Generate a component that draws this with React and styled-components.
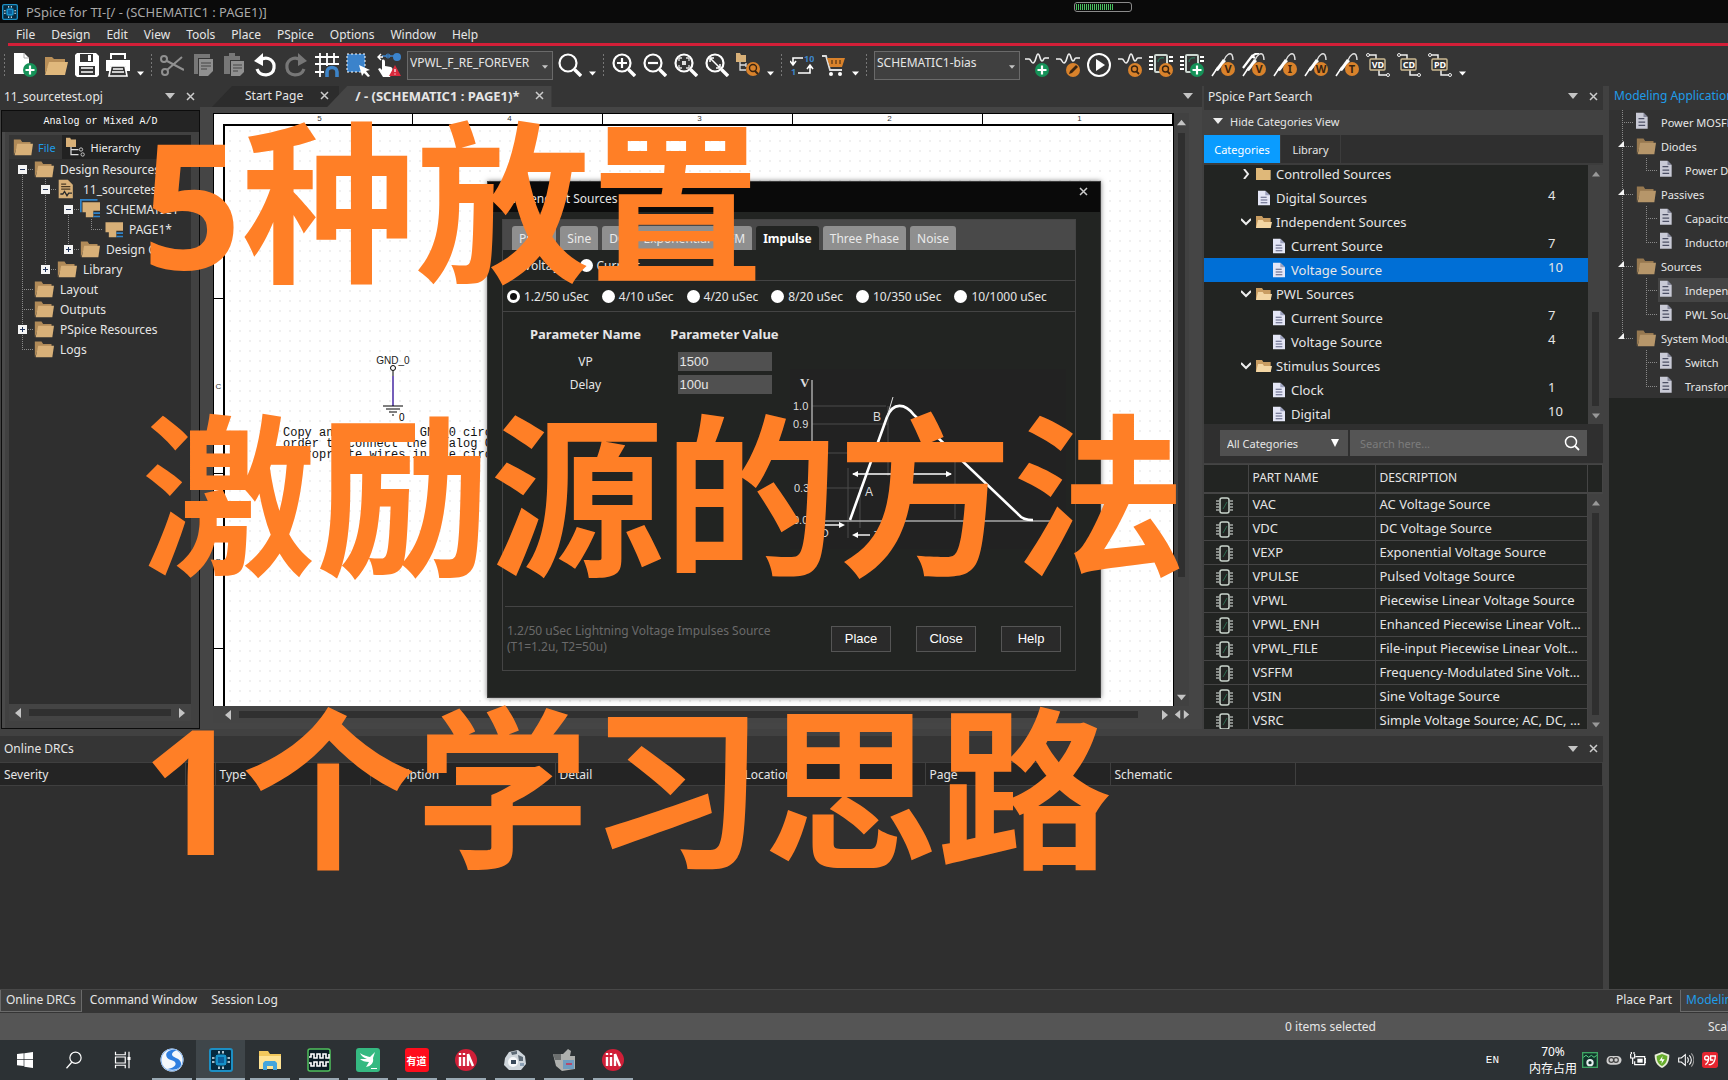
import React from 'react';
import styled, { createGlobalStyle, css } from 'styled-components';

const folderColor = '#d8b078';

const menus = ['File', 'Design', 'Edit', 'View', 'Tools', 'Place', 'PSpice', 'Options', 'Window', 'Help'];

// guides: one letter per tree level. v = line, t = tee, l = end, m = minus box, p = plus box, s = space
const projectTree = [
  { guides: ['m-first'], icon: 'folder', label: 'Design Resources' },
  { guides: ['v', 'm'], icon: 'design', label: '11_sourcetest' },
  { guides: ['v', 'v', 'm-first'], icon: 'schematic', label: 'SCHEMATIC1*' },
  { guides: ['v', 'v', 'v', 'l'], icon: 'page', label: 'PAGE1*' },
  { guides: ['v', 'v', 'p-last'], icon: 'folder', label: 'Design C' },
  { guides: ['v', 'p-last'], icon: 'folder', label: 'Library' },
  { guides: ['t'], icon: 'folder', label: 'Layout' },
  { guides: ['t'], icon: 'folder', label: 'Outputs' },
  { guides: ['p'], icon: 'folder', label: 'PSpice Resources' },
  { guides: ['l'], icon: 'folder', label: 'Logs' }
];

const modelTree = [
  { guides: ['t'], icon: 'doc', label: 'Power MOSFET' },
  { guides: ['a'], icon: 'folder', label: 'Diodes' },
  { guides: ['v', 'l'], icon: 'doc', label: 'Power Diode' },
  { guides: ['a'], icon: 'folder', label: 'Passives' },
  { guides: ['v', 't'], icon: 'doc', label: 'Capacitor' },
  { guides: ['v', 'l'], icon: 'doc', label: 'Inductor' },
  { guides: ['a'], icon: 'folder', label: 'Sources' },
  { guides: ['v', 't'], icon: 'doc', label: 'Independent Sources', active: true },
  { guides: ['v', 'l'], icon: 'doc', label: 'PWL Sources' },
  { guides: ['a-last'], icon: 'folder', label: 'System Modules' },
  { guides: ['s', 't'], icon: 'doc', label: 'Switch' },
  { guides: ['s', 'l'], icon: 'doc', label: 'Transformer' }
];

const categories = [
  { label: 'Controlled Sources', group: 'closed' },
  { label: 'Digital Sources', count: 4 },
  { label: 'Independent Sources', group: 'open' },
  { label: 'Current Source', count: 7, nested: true },
  { label: 'Voltage Source', count: 10, nested: true, active: true },
  { label: 'PWL Sources', group: 'open' },
  { label: 'Current Source', count: 7, nested: true },
  { label: 'Voltage Source', count: 4, nested: true },
  { label: 'Stimulus Sources', group: 'open' },
  { label: 'Clock', count: 1, nested: true },
  { label: 'Digital', count: 10, nested: true }
];

const parts = [
  ['VAC', 'AC Voltage Source'],
  ['VDC', 'DC Voltage Source'],
  ['VEXP', 'Exponential Voltage Source'],
  ['VPULSE', 'Pulsed Voltage Source'],
  ['VPWL', 'Piecewise Linear Voltage Source'],
  ['VPWL_ENH', 'Enhanced Piecewise Linear Voltage Source'],
  ['VPWL_FILE', 'File-input Piecewise Linear Voltage Source'],
  ['VSFFM', 'Frequency-Modulated Sine Voltage Source'],
  ['VSIN', 'Sine Voltage Source'],
  ['VSRC', 'Simple Voltage Source; AC, DC, and Transient']
];

const impulses = ['1.2/50 uSec', '4/10 uSec', '4/20 uSec', '8/20 uSec', '10/350 uSec', '10/1000 uSec'];

/* ---------- icons ---------- */

const Svg = ({ size = 24, children, ...rest }) => (
  <svg width={size} height={size} viewBox="0 0 24 24" fill="none" aria-hidden="true" {...rest}>
    {children}
  </svg>
);

const PlusBadge = () => (
  <>
    <circle cx="17" cy="17" r="7" fill="#159258" />
    <path d="M17 12.500v9M12.500 17h9" stroke="#fff" strokeWidth="2.200" />
  </>
);

const FindBadge = () => (
  <>
    <circle cx="17" cy="17" r="7" fill="#d9822b" />
    <circle cx="16.500" cy="16" r="3" stroke="#3a2410" strokeWidth="1.400" />
    <path d="M18.500 18.500l2.500 2.500" stroke="#3a2410" strokeWidth="1.800" />
  </>
);

const Lens = ({ children }) => (
  <>
    <circle cx="10" cy="10" r="8.500" stroke="#fff" strokeWidth="2.200" />
    <path d="M16.500 16.500L23 23" stroke="#fff" strokeWidth="3.400" />
    {children}
  </>
);

const Wave = () => <path d="M0 6h4c2 0 2 4 4 4 3 0 3-9 5-9s2 7 4 7 1-3 3-3h4" stroke="#eee" strokeWidth="1.600" />;

const ChipShape = () => (
  <>
    <rect x="6" y="2" width="12" height="17" rx="1" stroke="#ccd6d0" strokeWidth="2" />
    <path d="M9 9c0-3 3-5 6-4" stroke="#2f6c54" strokeWidth="1.500" />
    <path d="M0 4h4M0 8h4M0 12h4M0 16h4M20 4h4M20 8h4" stroke="#fff" strokeWidth="1.800" />
  </>
);

const Probe = () => (
  <>
    <path d="M1 23l6-9" stroke="#fff" strokeWidth="1.500" />
    <path d="M4 17L12 6l3 2-8 10z" fill="#fff" />
    <path d="M13 7c2-5 6-8 8-5 1 2 1 3 1 5" stroke="#ddd" strokeWidth="1.500" />
  </>
);

const ProbeIcon = ({ letter, double }) => (
  <Svg>
    {double && <path d="M1 15L10 3l3 2M9 5c2-3 5-5 8-4" stroke="#fff" strokeWidth="2.200" />}
    <Probe />
    <circle cx="17" cy="16" r="7" fill="#d9822b" />
    <text x="17" y="20" textAnchor="middle" fontSize="11" fontWeight="700" fill="#3a2410">{letter}</text>
  </Svg>
);

const PowerIcon = ({ label }) => (
  <Svg>
    <path d="M3 2h7v4M13 17v5h8" stroke="#eee" strokeWidth="1.500" />
    <circle cx="2" cy="2" r="1.500" stroke="#eee" />
    <circle cx="22" cy="22" r="1.500" stroke="#eee" />
    <rect x="4" y="6" width="15" height="11" rx="1" stroke="#cdbb93" strokeWidth="1.400" />
    <text x="12" y="15" textAnchor="middle" fontSize="9" fontWeight="700" fill="#fff">{label}</text>
  </Svg>
);

const icons = {
  new: (
    <Svg>
      <path d="M1 0h10l5 5v16H1z" fill="#fff" />
      <path d="M11 0v5h5" stroke="#aaa" />
      <PlusBadge />
    </Svg>
  ),
  open: (
    <Svg>
      <path d="M1 21V4h7l2 2h11v3H6z" fill="#b98f58" />
      <path d="M5 9h19l-3 13H1z" fill="#e0b87c" />
    </Svg>
  ),
  save: (
    <Svg>
      <path d="M0 2l2-2h19l3 3v19l-2 2H2l-2-2z" fill="#fff" />
      <path d="M5 1h13v8H5z" fill="#353535" />
      <path d="M13 2h3v6h-3z" fill="#fff" />
      <path d="M4 13h16v9H4z" fill="#353535" />
      <path d="M6 15h12M6 19h12" stroke="#fff" strokeWidth="1.600" />
    </Svg>
  ),
  print: (
    <Svg>
      <path d="M5 6V1h14v5" stroke="#fff" strokeWidth="2" />
      <path d="M0 7h24v11h-4v-5H4v5H0z" fill="#fff" />
      <path d="M5 13h14l2 10H3z" stroke="#fff" strokeWidth="1.600" />
      <path d="M7 16h10M6 19h12" stroke="#fff" strokeWidth="1.500" />
    </Svg>
  ),
  cut: (
    <Svg stroke="#909090" strokeWidth="2">
      <circle cx="4" cy="6" r="3" />
      <circle cx="5" cy="19" r="3" />
      <path d="M7 8l17 9M7 17L22 4" />
    </Svg>
  ),
  copy: (
    <Svg>
      <path d="M3 1h16v4H7v16H3z" fill="#777" />
      <path d="M8 6h14v12l-5 5H8z" fill="#909090" />
      <path d="M10 10h10M10 13h10M10 16h6" stroke="#444" />
    </Svg>
  ),
  paste: (
    <Svg>
      <path d="M2 3h5V0h6v3h5v4H8v14H2z" fill="#777" />
      <path d="M9 8h13v11l-4 4H9z" fill="#909090" />
      <path d="M11 12h9M11 15h9M11 18h5" stroke="#444" />
    </Svg>
  ),
  undo: (
    <Svg>
      <path d="M7 7c8-5 15 1 14 8-1 9-14 9-17 1" stroke="#fff" strokeWidth="3.200" />
      <path d="M10 0v13L1 8z" fill="#fff" />
    </Svg>
  ),
  redo: (
    <Svg>
      <path d="M17 7C9 2 2 8 3 15c1 9 14 9 17 1" stroke="#777" strokeWidth="3.200" />
      <path d="M14 0v13l9-5z" fill="#777" />
    </Svg>
  ),
  grid: (
    <Svg>
      <path d="M5 0v24M12 0v13M19 0v11M0 4h24M0 11h24M0 19h9" stroke="#fff" strokeWidth="1.800" />
      <path d="M12 24v-5c0-6 10-6 10 0v5" stroke="#3d84c8" strokeWidth="3.600" />
    </Svg>
  ),
  select: (
    <Svg>
      <path d="M1 1h18v18H1z" fill="#3b83cb" stroke="#fff" strokeDasharray="2 2" />
      <path d="M13 12l11 5-4 1 4 5-2 1-4-4-2 3z" fill="#fff" />
    </Svg>
  ),
  hand: (
    <Svg>
      <path d="M5 3h14" stroke="#3b83cb" strokeWidth="1.500" />
      <path d="M4 1L1 4l3 3M1 4h5" stroke="#fff" strokeWidth="1.400" />
      <circle cx="11" cy="3" r="2" stroke="#3b83cb" />
      <circle cx="20" cy="4" r="4" fill="#3b83cb" />
      <path d="M5 7c2-1 3 0 3 2v4l6 1c2 1 2 3 1 5l-2 5H6l-5-8 2-1 2 2z" fill="#fff" />
      <path d="M18 12l6 11H12z" fill="#d9293c" />
      <path d="M18 16v3M18 20.500v1" stroke="#fff" strokeWidth="1.200" />
    </Svg>
  ),
  search: <Svg><Lens /></Svg>,
  zoomIn: <Svg><Lens><path d="M10 5v10M5 10h10" stroke="#fff" strokeWidth="2.200" /></Lens></Svg>,
  zoomOut: <Svg><Lens><path d="M5 10h10" stroke="#fff" strokeWidth="2.200" /></Lens></Svg>,
  zoomFit: (
    <Svg>
      <Lens>
        <path d="M5 8V5h3M12 5h3v3M15 12v3h-3M8 15H5v-3" stroke="#ddd" strokeWidth="1.300" />
        <path d="M8 8h4v4H8z" fill="#ddd" />
      </Lens>
    </Svg>
  ),
  zoomArea: (
    <Svg>
      <Lens><path d="M6 6l8 8M5 9V5h4M11 15h4v-4" stroke="#fff" strokeWidth="1.500" /></Lens>
    </Svg>
  ),
  findPart: (
    <Svg>
      <path d="M0 0h4l1 2h5v7H0z" fill="#d8b078" />
      <path d="M4 9v8h6M4 12h6M10 10v4" stroke="#ddd" strokeWidth="1.300" />
      <circle cx="17" cy="16" r="7" fill="#d9822b" />
      <circle cx="17" cy="15" r="3.500" stroke="#3a2410" strokeWidth="1.400" />
      <path d="M19 18l3 3" stroke="#3a2410" strokeWidth="2" />
    </Svg>
  ),
  renumber: (
    <Svg>
      <path d="M13 5H3v6M0 8l3 4 3-4M8 20h12v-7M17 16l3-4 3 4" stroke="#fff" strokeWidth="1.600" />
      <text x="14" y="9" fontSize="9" fontWeight="700" fill="#3d84c8">10</text>
      <text x="1" y="22" fontSize="9" fontWeight="700" fill="#3d84c8">1</text>
    </Svg>
  ),
  cart: (
    <Svg>
      <path d="M1 3h4l4 14h12" stroke="#ddd" strokeWidth="1.800" />
      <path d="M6 5h18l-3 9H9z" fill="#d9822b" />
      <path d="M11 7v4M15 7v4M19 7v4" stroke="#3a2410" />
      <circle cx="10" cy="21" r="2" fill="#fff" />
      <circle cx="19" cy="21" r="2" fill="#fff" />
    </Svg>
  ),
  simNew: <Svg><Wave /><PlusBadge /></Svg>,
  simEdit: (
    <Svg>
      <Wave />
      <circle cx="17" cy="17" r="7" fill="#d9822b" />
      <path d="M13 21l1-3 6-6 2 2-6 6z" fill="#3a2410" />
    </Svg>
  ),
  run: (
    <Svg>
      <circle cx="12" cy="12" r="11" stroke="#fff" strokeWidth="2" />
      <path d="M9 6l9 6-9 6z" fill="#fff" />
    </Svg>
  ),
  simView: <Svg><Wave /><FindBadge /></Svg>,
  chipFind: <Svg><ChipShape /><FindBadge /></Svg>,
  chipAdd: <Svg><ChipShape /><PlusBadge /></Svg>,
  v: <ProbeIcon letter="V" />,
  vv: <ProbeIcon letter="V" double />,
  i: <ProbeIcon letter="I" />,
  w: <ProbeIcon letter="W" />,
  t: <ProbeIcon letter="T" />,
  vd: <PowerIcon label="VD" />,
  cd: <PowerIcon label="CD" />,
  pd: <PowerIcon label="PD" />
};

const TreeIcon = ({ kind, dim }) => {
  if (kind === 'folder') {
    return (
      <Svg size={20} opacity={dim ? 0.8 : 1}>
        <path d="M1 22V3h8l2 3h10v3H6z" fill="#b08a58" />
        <path d="M5 8h19l-2 14H2z" fill={folderColor} />
      </Svg>
    );
  }
  if (kind === 'design') {
    return (
      <Svg size={20}>
        <path d="M2 1h11l6 6v16H2z" fill={folderColor} />
        <path d="M5 6h6M5 9h11M5 12h11" stroke="#4a3a24" strokeWidth="1.500" />
        <path d="M4 18h3l2-3 3 5 2-3h4" stroke="#2b2b2b" strokeWidth="1.600" />
      </Svg>
    );
  }
  if (kind === 'doc') {
    return (
      <Svg size={20}>
        <path d="M0 1h9l5 5v14H0z" fill="#c9cad6" />
        <path d="M9 1v5h5z" fill="#85879a" />
        <path d="M3 8h7M3 12h8M3 16h8" stroke="#4d5065" strokeWidth="1.500" />
      </Svg>
    );
  }
  return (
    <Svg size={20}>
      {kind === 'schematic' && <path d="M1 16V1h20" stroke="#2f83c9" strokeWidth="2" />}
      <path d="M3 4h21v10h-8v8H7v-6H3z" fill={folderColor} />
      <path d="M16 17h8M16 21h8" stroke="#2f83c9" strokeWidth="2" />
    </Svg>
  );
};

const CategoryIcon = ({ kind }) => {
  if (kind) {
    return (
      <Svg size={16}>
        <path d="M0 21V3h9l2 3h11v15z" fill={kind === 'open' ? '#c99d62' : '#dfb879'} />
        {kind === 'open' && <path d="M0 21L3 9h7l2 3h12l-2 9z" fill="#f3d6a4" />}
      </Svg>
    );
  }
  return (
    <Svg size={16}>
      <path d="M3 1h11l7 7v15H3z" fill="#e4e6f6" />
      <path d="M14 1v7h7z" fill="#9ba0bd" />
      <path d="M7 11h9M7 15h10M7 19h10" stroke="#5a5f80" strokeWidth="1.600" />
    </Svg>
  );
};

const PartIcon = () => (
  <svg width="17" height="17" viewBox="0 0 17 17" fill="none" aria-hidden="true">
    <rect x="4" y="1" width="9" height="15" rx="2" stroke="#c9d4cc" strokeWidth="1.500" />
    <path d="M7 12l4-7" stroke="#2c6c50" />
    <path d="M0 4h3M0 7h3M0 10h3M0 13h3M14 4h3M14 7h3M14 10h3M14 13h3" stroke="#e6ece8" />
  </svg>
);

const Guide = ({ kind, step, height }) => {
  const mid = Math.floor(step / 2);
  const cy = height / 2;
  const [type, where] = kind.split('-');
  const top = where === 'first' ? cy : 0;
  const bottom = type === 'l' || where === 'last' ? cy : height;
  return (
    <svg width={step} height={height} fill="none" aria-hidden="true">
      {type !== 's' && (
        <path d={`M${mid + 0.5} ${top}V${bottom}`} stroke="#8a8a8a" strokeDasharray="1 1" />
      )}
      {type !== 's' && type !== 'v' && (
        <path d={`M${mid} ${cy + 0.5}H${step}`} stroke="#8a8a8a" strokeDasharray="1 1" />
      )}
      {(type === 'm' || type === 'p') && (
        <>
          <rect x={mid - 4} y={cy - 4} width="9" height="9" fill="#f4f4f4" />
          <path d={`M${mid - 2} ${cy + 0.5}h5`} stroke="#23365c" />
          {type === 'p' && <path d={`M${mid + 0.5} ${cy - 2}v5`} stroke="#23365c" />}
        </>
      )}
      {type === 'a' && <path d={`M${mid + 2} ${cy - 5}v6h-6z`} fill="#f4f4f4" />}
    </svg>
  );
};

const Arrow = ({ dir = 'down', size = 8, color = '#c4c4c4' }) => {
  const shapes = {
    down: 'M0 2h10L5 8z',
    up: 'M0 8h10L5 2z',
    left: 'M8 0v10L2 5z',
    right: 'M2 0v10l6-5z'
  };
  return (
    <svg width={size} height={size} viewBox="0 0 10 10" aria-hidden="true">
      <path d={shapes[dir]} fill={color} />
    </svg>
  );
};

const Cross = () => (
  <svg width="9" height="9" viewBox="0 0 9 9" aria-hidden="true">
    <path d="M1 1l7 7M8 1L1 8" stroke="#ccc" strokeWidth="1.500" />
  </svg>
);

const AppLogo = ({ size }) => (
  <Svg size={size}>
    <rect x="1" y="1" width="22" height="22" rx="2" fill="#062a3f" stroke="#1c8fc4" strokeWidth="2" />
    <path d="M10 3v18M14 3v18M3 10h18M3 14h18" stroke="#d7ecf5" strokeWidth="1.600" />
    <rect x="6" y="6" width="12" height="12" rx="3" fill="#1591c9" stroke="#062a3f" />
    <rect x="9" y="9" width="6" height="6" fill="#0b5f9c" />
  </Svg>
);

const ImpulseChart = () => (
  <svg width="276" height="180" viewBox="0 0 276 180" fill="none" role="img" aria-label="Impulse waveform">
    <rect width="276" height="180" fill="#222222" />
    <path d="M22 37h74M22 55h76M22 84h52M22 119h50M98 37v70M165 84v66M58 99v70M70 119v40" stroke="#4a4a4a" />
    <path d="M22 11v141M22 152h243" stroke="#a8a8a8" strokeWidth="1.500" />
    <path d="M60 151L97 48c6-15 18-14 27-2l105 100c3 4 8 5 14 5" stroke="#fff" strokeWidth="2.600" />
    <path d="M97 48l6-20" stroke="#ddd" />
    <path d="M63 105h98" stroke="#fff" strokeWidth="1.400" />
    <path d="M68 102l-6 3 6 3zM156 102l6 3-6 3z" fill="#fff" />
    <path d="M24 156h28" stroke="#fff" strokeWidth="1.400" />
    <path d="M49 153l6 3-6 3zM68 163l-6 3 6 3z" fill="#fff" />
    <path d="M66 166h14" stroke="#fff" strokeWidth="1.400" />
    <g fill="#ddd" fontSize="12" fontFamily="Liberation Sans, sans-serif">
      <text x="10" y="18" fontFamily="Liberation Serif, serif" fontWeight="700" fontSize="13">V</text>
      <text x="3" y="41" fontSize="11">1.0</text>
      <text x="3" y="59" fontSize="11">0.9</text>
      <text x="4" y="89" fontSize="11">0.5</text>
      <text x="4" y="123" fontSize="11">0.3</text>
      <text x="3" y="155" fontSize="11">0.0</text>
      <text x="83" y="52">B</text>
      <text x="75" y="127">A</text>
      <text x="112" y="115" fontSize="11">T<tspan fontSize="8">2</tspan></text>
      <text x="24" y="168" fontSize="11">TD</text>
      <text x="84" y="170" fontSize="11">T<tspan fontSize="8">1</tspan></text>
    </g>
  </svg>
);

const GroundSymbol = () => (
  <svg width="60" height="72" viewBox="0 0 60 72" fill="none" role="img" aria-label="GND_0" overflow="visible">
    <text x="16" y="9" textAnchor="middle" fontSize="10" fill="#222" fontFamily="Liberation Sans, sans-serif">GND_0</text>
    <circle cx="16" cy="13" r="2.500" stroke="#000" />
    <path d="M16 16v5" stroke="#000" />
    <path d="M16 21v30" stroke="#3a1a9c" strokeWidth="1.400" />
    <path d="M6 51h20M9 54h14M12 57h8M15 60h2" stroke="#000" />
    <text x="22" y="66" fontSize="10" fill="#000" fontFamily="Liberation Sans, sans-serif">0</text>
  </svg>
);

/* ---------- toolbar layout ---------- */

const ToolbarGroup = ({ names }) => names.map((name) => (
  <ToolButton key={name} type="button" aria-label={name}>{icons[name]}</ToolButton>
));

const Toolbar = () => (
  <ToolbarBar>
    <Grip />
    <ToolbarGroup names={['new', 'open', 'save', 'print']} />
    <Overflow><Arrow size={7} color="#fff" /></Overflow>
    <Grip />
    <ToolbarGroup names={['cut', 'copy', 'paste', 'undo', 'redo', 'grid', 'select', 'hand']} />
    <Combo>
      <select aria-label="Part"><option>VPWL_F_RE_FOREVER</option></select>
      <Arrow size={6} />
    </Combo>
    <ToolbarGroup names={['search']} />
    <Overflow><Arrow size={7} color="#fff" /></Overflow>
    <Grip />
    <ToolbarGroup names={['zoomIn', 'zoomOut', 'zoomFit', 'zoomArea', 'findPart']} />
    <Overflow><Arrow size={7} color="#fff" /></Overflow>
    <Grip />
    <ToolbarGroup names={['renumber', 'cart']} />
    <Overflow><Arrow size={7} color="#fff" /></Overflow>
    <Grip />
    <Combo>
      <select aria-label="Simulation profile"><option>SCHEMATIC1-bias</option></select>
      <Arrow size={6} />
    </Combo>
    <ToolbarGroup
      names={['simNew', 'simEdit', 'run', 'simView', 'chipFind', 'chipAdd', 'v', 'vv', 'i', 'w', 't', 'vd', 'cd', 'pd']}
    />
    <Overflow><Arrow size={7} color="#fff" /></Overflow>
  </ToolbarBar>
);

const PanelHeader = ({ title }) => (
  <HeaderBar>
    <h2>{title}</h2>
    <IconButton type="button" aria-label="Panel menu"><Arrow size={10} /></IconButton>
    <IconButton type="button" aria-label="Close panel"><Cross /></IconButton>
  </HeaderBar>
);

const ProjectPanel = () => (
  <ProjectColumn>
    <PanelHeader title="11_sourcetest.opj" />
    <ProjectBox>
      <ProjectType>Analog or Mixed A/D</ProjectType>
      <ProjectInner>
        <ProjectTabs>
          <ProjectTab type="button" $active><TreeIcon kind="folder" />File</ProjectTab>
          <ProjectTab type="button">
            <Svg size={20}>
              <path d="M0 1h5l1 2h6v9H0z" fill={folderColor} />
              <path d="M6 12v9h9M6 15h9" stroke="#ddd" strokeWidth="1.500" />
              <circle cx="18" cy="15" r="2" stroke="#ddd" />
              <circle cx="20" cy="21" r="2" stroke="#ddd" />
            </Svg>
            Hierarchy
          </ProjectTab>
        </ProjectTabs>
        <ProjectTree>
          {projectTree.map((row) => (
            <ProjectRow key={row.label}>
              {row.guides.map((g, i) => <Guide key={i} kind={g} step={23} height={20} />)}
              <TreeIcon kind={row.icon} />
              <span>{row.label}</span>
            </ProjectRow>
          ))}
        </ProjectTree>
        <HScroll><Arrow dir="left" size={10} /><i /><Arrow dir="right" size={10} /></HScroll>
      </ProjectInner>
    </ProjectBox>
  </ProjectColumn>
);

const SourceDialog = () => (
  <Dialog role="dialog" aria-label="Independent Sources">
    <DialogTitle>
      <h2>Independent Sources</h2>
      <IconButton type="button" aria-label="Close dialog"><Cross /></IconButton>
    </DialogTitle>
    <DialogFrame>
      <DialogTabs>
        {['Pulse', 'Sine', 'DC', 'Exponential', 'FM', 'Impulse', 'Three Phase', 'Noise'].map((tab) => (
          <DialogTab key={tab} type="button" $active={tab === 'Impulse'}>{tab}</DialogTab>
        ))}
      </DialogTabs>
      <RadioRow>
        <label><input type="radio" name="kind" defaultChecked />Voltage</label>
        <label><input type="radio" name="kind" />Current</label>
      </RadioRow>
      <RadioRow>
        {impulses.map((name, i) => (
          <label key={name}><input type="radio" name="impulse" defaultChecked={i === 0} />{name}</label>
        ))}
      </RadioRow>
      <DialogBody>
        <ParamTable>
          <thead>
            <tr><th>Parameter Name</th><th>Parameter Value</th></tr>
          </thead>
          <tbody>
            <tr>
              <td><label htmlFor="vp">VP</label></td>
              <td><input id="vp" defaultValue="1500" /></td>
            </tr>
            <tr>
              <td><label htmlFor="delay">Delay</label></td>
              <td><input id="delay" defaultValue="100u" /></td>
            </tr>
          </tbody>
        </ParamTable>
        <ChartHolder><ImpulseChart /></ChartHolder>
      </DialogBody>
      <DialogFooter>
        <p>1.2/50 uSec Lightning Voltage Impulses Source<br />(T1=1.2u, T2=50u)</p>
        <DialogButton type="button">Place</DialogButton>
        <DialogButton type="button">Close</DialogButton>
        <DialogButton type="button">Help</DialogButton>
      </DialogFooter>
    </DialogFrame>
  </Dialog>
);

const Editor = () => (
  <EditorColumn>
    <EditorTabs>
      <EditorTab type="button">Start Page<Cross /></EditorTab>
      <EditorTab type="button" $active>/ - (SCHEMATIC1 : PAGE1)*<Cross /></EditorTab>
      <TabListArrow><Arrow size={10} /></TabListArrow>
    </EditorTabs>
    <EditorGrid>
      <Sheet>
        <TopRuler>{[5, 4, 3, 2, 1].map((n) => <span key={n}>{n}</span>)}</TopRuler>
        <SideRuler>{['D', 'C', 'B', 'A'].map((n) => <span key={n}>{n}</span>)}</SideRuler>
        <Page>
          <Placed $left={152} $top={229}><GroundSymbol /></Placed>
          <Placed $left={58} $top={302}>
            <Note>
              Copy and paste the GND_0 circuit in<br />
              order to connect the Analog Ground to<br />
              appropriate wires in the circuit
            </Note>
          </Placed>
        </Page>
      </Sheet>
      <VScroll $after={110}><Arrow dir="up" size={9} /><i /><Arrow size={9} /></VScroll>
      <HScroll $wide><Arrow dir="left" size={10} /><i /><Arrow dir="right" size={10} /></HScroll>
      <Splitter><Arrow dir="left" size={9} /><Arrow dir="right" size={9} /></Splitter>
    </EditorGrid>
    <SourceDialog />
  </EditorColumn>
);

const PartSearch = () => (
  <SearchColumn>
    <PanelHeader title="PSpice Part Search" />
    <HideToggle type="button"><Arrow size={10} color="#eee" />Hide Categories View</HideToggle>
    <SearchTabs>
      <SearchTab type="button" $active>Categories</SearchTab>
      <SearchTab type="button">Library</SearchTab>
    </SearchTabs>
    <CategoryArea>
      <CategoryList>
        {categories.map((c, i) => (
          <CategoryRow key={i} $nested={c.nested} $active={c.active}>
            <Twisty>
              {c.group && (
                <svg width="10" height="10" viewBox="0 0 10 10" fill="none">
                  <path d={c.group === 'open' ? 'M0 2l5 5 5-5' : 'M3 0l4 5-4 5'} stroke="#eee" strokeWidth="2" />
                </svg>
              )}
            </Twisty>
            <CategoryIcon kind={c.group} />
            <span>{c.label}</span>
            <b>{c.count}</b>
          </CategoryRow>
        ))}
      </CategoryList>
      <VScroll $before={128}><Arrow dir="up" size={8} color="#999" /><i /><Arrow size={8} color="#999" /></VScroll>
    </CategoryArea>
    <SearchBar>
      <FilterBox>
        <select aria-label="Category"><option>All Categories</option></select>
        <svg width="8" height="8" viewBox="0 0 8 8"><path d="M0 0h8L4 8z" fill="#fff" /></svg>
      </FilterBox>
      <SearchBox>
        <input type="search" aria-label="Search parts" placeholder="Search here..." />
        <svg width="16" height="16" viewBox="0 0 16 16" fill="none">
          <circle cx="7" cy="7" r="5.500" stroke="#fff" strokeWidth="1.500" />
          <path d="M11 11l4 4" stroke="#fff" strokeWidth="1.800" />
        </svg>
      </SearchBox>
    </SearchBar>
    <PartArea>
      <PartTable>
        <colgroup><col width="44" /><col width="127" /><col /><col width="15" /></colgroup>
        <thead>
          <tr><th /><th>PART NAME</th><th>DESCRIPTION</th><th /></tr>
        </thead>
        <tbody>
          {parts.map(([name, text], i) => (
            <tr key={name}>
              <td><PartIcon /></td>
              <td>{name}</td>
              <td>{text}</td>
              {i === 0 && (
                <td rowSpan={parts.length}>
                  <VScroll><Arrow dir="up" size={8} color="#999" /><i /><Arrow size={8} color="#999" /></VScroll>
                </td>
              )}
            </tr>
          ))}
        </tbody>
      </PartTable>
    </PartArea>
  </SearchColumn>
);

const Modeling = () => (
  <ModelColumn>
    <ModelTitle>Modeling Application</ModelTitle>
    <ModelTree>
      {modelTree.map((row) => (
        <ModelRow key={row.label}>
          {row.guides.map((g, i) => <Guide key={i} kind={g} step={24} height={24} />)}
          <ModelLabel $active={row.active}><TreeIcon kind={row.icon} dim />{row.label}</ModelLabel>
        </ModelRow>
      ))}
    </ModelTree>
  </ModelColumn>
);

const DrcPanel = () => (
  <DrcSection>
    <PanelHeader title="Online DRCs" />
    <DrcTable>
      <colgroup>
        <col width="185" /><col width="30" /><col width="155" /><col width="185" /><col width="185" />
        <col width="185" /><col width="185" /><col width="185" /><col />
      </colgroup>
      <thead>
        <tr>
          {['Severity', '', 'Type', 'Description', 'Detail', 'Location', 'Page', 'Schematic', ''].map((h, i) => (
            <th key={i}>{h}</th>
          ))}
        </tr>
      </thead>
    </DrcTable>
  </DrcSection>
);

const Reader = () => (
  <Svg>
    <circle cx="12" cy="12" r="11" fill="#d01f38" />
    <path d="M6 9v9M10 9v9M14 6l5 12M14 6v12" stroke="#fff" strokeWidth="2.400" />
    <path d="M6 5v2M10 5v2" stroke="#fff" strokeWidth="2.400" />
  </Svg>
);

const Taskbar = () => (
  <TaskbarBar>
    <TaskButton type="button" aria-label="Start">
      <Svg size={16}>
        <path d="M0 3l10-1v9H0zM11 2l13-2v11H11zM0 12h10v9L0 20zM11 12h13v12l-13-2z" fill="#fff" />
      </Svg>
    </TaskButton>
    <TaskButton type="button" aria-label="Search">
      <Svg size={18}>
        <circle cx="14" cy="9" r="7.500" stroke="#fff" strokeWidth="1.600" />
        <path d="M9 15l-7 8" stroke="#fff" strokeWidth="1.600" />
      </Svg>
    </TaskButton>
    <TaskButton type="button" aria-label="Task view">
      <Svg size={18}>
        <path d="M2 1v4h13V1M2 23v-4h13v4M2 8h13v8H2zM20 1v22" stroke="#fff" strokeWidth="1.600" />
        <path d="M18 8h4v4h-4z" fill="#fff" />
      </Svg>
    </TaskButton>
    <TaskButton type="button" aria-label="Browser" $open>
      <Svg>
        <circle cx="12" cy="12" r="11.500" fill="#f4f8fc" />
        <path d="M17 2C5 0 3 10 11 12s5 8-4 9c15 4 18-8 9-11-6-2-5-6 1-8z" fill="#2f7fe0" />
        <circle cx="12" cy="12" r="11" stroke="#7db0ee" />
      </Svg>
    </TaskButton>
    <TaskButton type="button" aria-label="PSpice" $open $active><AppLogo size={24} /></TaskButton>
    <TaskButton type="button" aria-label="Files" $open>
      <Svg>
        <path d="M1 3h9l2 3h11v15H1z" fill="#f2c85c" />
        <path d="M1 8h22v13H1z" fill="#ffe394" />
        <path d="M5 22v-7l2-2h10l2 2v7h-4v-4H9v4z" fill="#45a5dc" />
      </Svg>
    </TaskButton>
    <TaskButton type="button" aria-label="Waveforms" $open>
      <Svg>
        <rect x="1" y="1" width="22" height="22" rx="2" fill="#0c1c24" stroke="#4fc05c" strokeWidth="1.500" />
        <path d="M2 9h2V6h3v4h3V6h3v4h3V6h3v4h3V6" stroke="#fff" strokeWidth="1.600" />
        <path d="M2 15h2v3h3v-4h3v4h3v-4h3v4h3v-4h3" stroke="#fff" strokeWidth="1.600" />
      </Svg>
    </TaskButton>
    <TaskButton type="button" aria-label="Notes" $open>
      <Svg>
        <rect width="24" height="24" rx="3" fill="#35b981" />
        <path d="M4 5c4 3 7 3 10 4l5-5-2 6c1 5-2 8-7 9l3-5c-4 0-7-1-9-3h7C8 10 5 8 4 5z" fill="#fff" />
        <path d="M15 20.500h6" stroke="#fff" />
      </Svg>
    </TaskButton>
    <TaskButton type="button" aria-label="Dictionary" $open><Youdao>有道</Youdao></TaskButton>
    <TaskButton type="button" aria-label="Reader" $open><Reader /></TaskButton>
    <TaskButton type="button" aria-label="Capture" $open>
      <Svg>
        <path d="M2 10l4-6 9-2 7 6 1 8-5 6H6l-5-5z" fill="#cfd6dc" />
        <path d="M8 4l6-1v3l-5 1zM15 7l5 2v4h-4z" fill="#5d6a76" />
        <circle cx="10" cy="14" r="5" fill="#f6f8fa" />
        <path d="M8 12h5v4H8z" fill="#39495a" />
        <path d="M17 15h4v3h-4z" fill="#8ba0b5" />
      </Svg>
    </TaskButton>
    <TaskButton type="button" aria-label="Video" $open>
      <Svg>
        <path d="M1 6h10l5-5 3 2-1 5h5v13l-13 2-6-5z" fill="#aeb0ae" />
        <path d="M1 6h8v6H3z" fill="#6c6f6f" />
        <path d="M11 12h11v9H11z" fill="#6f9cc0" />
        <path d="M14 16h6" stroke="#b54a6c" strokeWidth="2" />
      </Svg>
    </TaskButton>
    <TaskButton type="button" aria-label="Reader two" $open><Reader /></TaskButton>
    <Tray>
      <Lang>EN</Lang>
      <Memory>70%<br />内存占用</Memory>
      <Svg size={16}>
        <rect x="1" y="1" width="22" height="22" fill="#12332b" stroke="#3fa564" strokeWidth="2" />
        <path d="M2 8l4-3 4 3 4-3 4 3 4-3" stroke="#57d284" strokeWidth="1.500" />
        <circle cx="12" cy="16" r="4" stroke="#e8eef0" strokeWidth="3" />
      </Svg>
      <Svg size={16}>
        <path d="M6 6h11c6 1 7 5 6 8-1 4-5 5-8 5H7c-4 0-7-3-6-7 0-3 2-5 5-6z" fill="#cfcfcf" />
        <circle cx="8" cy="12" r="3.500" stroke="#444" strokeWidth="1.800" />
        <circle cx="15" cy="12" r="3.500" stroke="#444" strokeWidth="1.800" />
      </Svg>
      <Svg size={16}>
        <path d="M8 7h14v12H7v-5M22 10h2v6h-2" stroke="#fff" strokeWidth="1.800" />
        <path d="M11 10h8v6h-8z" fill="#fff" />
        <path d="M1 3v6h6V3M2 0v3M6 0v3M4 9v9" stroke="#fff" strokeWidth="1.800" />
      </Svg>
      <Svg size={16}>
        <path d="M12 0l11 4c0 10-3 16-11 20C4 20 1 14 1 4z" fill="#e9edda" />
        <path d="M12 3l8 3c0 7-2 12-8 15-6-3-8-8-8-15z" fill="#67ad2c" />
        <path d="M13 6l-5 7h4l-1 5 5-7h-4z" fill="#fff" />
      </Svg>
      <Svg size={16}>
        <path d="M1 9h4l6-5v16l-6-5H1z" stroke="#fff" strokeWidth="1.600" />
        <path d="M14 8c2 2 2 6 0 8M17 5c4 4 4 10 0 14" stroke="#fff" strokeWidth="1.600" />
        <path d="M20 2c5 6 5 14 0 20" stroke="#999" strokeWidth="1.600" />
      </Svg>
      <Svg size={16}>
        <rect width="24" height="24" rx="4" fill="#e5252f" />
        <circle cx="7" cy="9" r="3" stroke="#fff" strokeWidth="2" />
        <path d="M10 9c0 5-2 8-5 10M12 6h8c0 8-2 11-7 13h-3M13 6v6h4" stroke="#fff" strokeWidth="2" />
      </Svg>
    </Tray>
  </TaskbarBar>
);

const App = () => (
  <Shell>
    <GlobalStyle />
    <TitleBar>
      <AppLogo size={16} />
      <h1>PSpice for TI-[/ - (SCHEMATIC1 : PAGE1)]</h1>
      <Meter><i /></Meter>
    </TitleBar>
    <MenuBar>
      {menus.map((m) => <button key={m} type="button">{m}</button>)}
    </MenuBar>
    <Toolbar />
    <Work>
      <MainArea>
        <DockRow>
          <ProjectPanel />
          <Editor />
          <PartSearch />
        </DockRow>
        <DrcPanel />
      </MainArea>
      <Modeling />
    </Work>
    <BottomTabs>
      <BottomTab type="button" $active>Online DRCs</BottomTab>
      <BottomTab type="button">Command Window</BottomTab>
      <BottomTab type="button">Session Log</BottomTab>
      <RightTabs>
        <BottomTab type="button">Place Part</BottomTab>
        <BottomTab type="button" $active $blue>Modeling</BottomTab>
      </RightTabs>
    </BottomTabs>
    <StatusBar>
      <span>0 items selected</span>
      <em>Scale</em>
    </StatusBar>
    <Taskbar />
    <Caption>
      <p>5种放置</p>
      <p>激励源的方法</p>
      <p>1个学习思路</p>
    </Caption>
  </Shell>
);

/* ---------- styles ---------- */

const GlobalStyle = createGlobalStyle`
  * {
    box-sizing: border-box;
  }
  body {
    margin: 0;
    background: #2f2f2f;
    color: #e6e6e6;
    font-family: 'Noto Sans', 'Noto Sans CJK SC', sans-serif;
    font-size: 12px;
    overflow: hidden;
  }
  button, input, select {
    font: inherit;
    color: inherit;
    border: none;
    background: none;
    padding: 0;
    margin: 0;
    border-radius: 0;
  }
  h1, h2, p, ul {
    margin: 0;
    padding: 0;
    font-size: inherit;
    font-weight: inherit;
    list-style: none;
  }
  svg {
    flex: none;
    display: block;
  }
  select {
    appearance: none;
  }
`;

const Shell = styled.div`
  position: relative;
  height: 100vh;
  display: flex;
  flex-direction: column;
  overflow: hidden;
  white-space: nowrap;
`;

const TitleBar = styled.header`
  height: 23px;
  flex: none;
  display: flex;
  align-items: center;
  gap: 8px;
  padding-left: 2px;
  background: #0a0a0a;
  color: #a8a8a8;
  font-size: 13px;
  h1 {
    flex: 1;
  }
`;

const Meter = styled.div`
  width: 58px;
  height: 10px;
  margin: 0 596px 10px 0;
  padding: 1px;
  border: 1px solid #8b8b8b;
  border-radius: 3px;
  i {
    display: block;
    width: 38px;
    height: 6px;
    background: repeating-linear-gradient(90deg, #49c160 0 1px, #0a0a0a 1px 2px);
  }
`;

const MenuBar = styled.nav`
  height: 23px;
  flex: none;
  display: flex;
  gap: 16px;
  padding: 2px 0 0 8px;
  margin-left: 8px;
  border-bottom: 3px solid #d31f38;
  box-shadow: -8px 0 0 #353535;
  background: #353535;
`;

const ToolbarBar = styled.div`
  height: 40px;
  flex: none;
  display: flex;
  align-items: center;
  background: #353535;
  padding-bottom: 2px;
`;

const Grip = styled.i`
  width: 9px;
  height: 24px;
  flex: none;
  background: radial-gradient(circle, #777 1px, transparent 1px) 0 0 / 9px 4px;
`;

const ToolButton = styled.button`
  width: 31px;
  height: 30px;
  flex: none;
  display: grid;
  place-items: center;
`;

const Overflow = styled.span`
  width: 14px;
  height: 24px;
  flex: none;
  display: flex;
  align-items: flex-end;
  justify-content: center;
`;

const Combo = styled.div`
  position: relative;
  width: 146px;
  height: 29px;
  flex: none;
  margin: 0 1px 0 3px;
  border: 1px solid #6a6a6a;
  background: #404040;
  select {
    width: 100%;
    height: 22px;
    padding-left: 2px;
  }
  svg {
    position: absolute;
    right: 4px;
    top: 12px;
  }
`;

const Work = styled.main`
  flex: 1;
  min-height: 0;
  display: flex;
  background: #414141;
`;

const MainArea = styled.div`
  flex: 1;
  min-width: 0;
  display: flex;
  flex-direction: column;
`;

const DockRow = styled.div`
  flex: 1;
  min-height: 0;
  display: flex;
  padding-bottom: 1px;
`;

const HeaderBar = styled.div`
  height: 24px;
  flex: none;
  display: flex;
  align-items: center;
  gap: 8px;
  padding: 0 4px 4px 4px;
  background: #353535;
  h2 {
    flex: 1;
  }
`;

const IconButton = styled.button`
  display: grid;
  place-items: center;
  width: 12px;
  height: 16px;
`;

const ProjectColumn = styled.section`
  width: 200px;
  display: flex;
  flex-direction: column;
`;

const ProjectBox = styled.div`
  flex: 1;
  min-height: 0;
  display: flex;
  flex-direction: column;
  border: 1px solid #0c0c0c;
  margin-left: 1px;
`;

const ProjectType = styled.div`
  height: 21px;
  display: grid;
  place-items: center;
  background: #242424;
  font: 10px 'Liberation Mono', monospace;
  color: #fff;
`;

const ProjectInner = styled.div`
  flex: 1;
  min-height: 0;
  display: flex;
  flex-direction: column;
  padding: 3px 8px 7px 4px;
  border-left: 3px solid #4a4a4a;
`;

const ProjectTabs = styled.div`
  display: flex;
  height: 24px;
  background: #222;
`;

const ProjectTab = styled.button`
  display: flex;
  align-items: center;
  gap: 5px;
  padding: 0 6px 0 4px;
  font-size: 11px;
  background: ${(props) => (props.$active ? '#353535' : 'transparent')};
  color: ${(props) => (props.$active ? '#1f9ce8' : '#eee')};
`;

const ProjectTree = styled.ul`
  flex: 1;
  min-height: 0;
  padding-left: 2px;
  background: #2f2f2f;
`;

const ProjectRow = styled.li`
  display: flex;
  align-items: center;
  height: 20px;
  span {
    margin-left: 6px;
  }
`;

const HScroll = styled.div`
  height: 17px;
  flex: none;
  display: flex;
  align-items: center;
  gap: 6px;
  padding: ${(props) => (props.$wide ? '0 4px 0 10px' : '0 4px')};
  background: #444;
  i {
    flex: 1;
    height: 7px;
    margin-right: ${(props) => (props.$wide ? '16px' : '0')};
    background: #303030;
  }
`;

const VScroll = styled.div`
  width: 15px;
  height: 100%;
  flex: none;
  display: flex;
  flex-direction: column;
  align-items: center;
  gap: 6px;
  padding: 5px 0 4px;
  background: #414141;
  i {
    flex: 1;
    width: 7px;
    margin-top: ${(props) => props.$before || 0}px;
    margin-bottom: ${(props) => props.$after || 0}px;
    background: #2f2f2f;
  }
`;

const EditorColumn = styled.section`
  position: relative;
  flex: 1;
  min-width: 0;
  display: flex;
  flex-direction: column;
  background: #454545;
  padding: 0 12px 6px 13px;
  margin-right: 2px;
`;

const EditorTabs = styled.div`
  height: 21px;
  display: flex;
  margin: 0 -12px 6px -13px;
  padding-left: 12px;
  background: #353535;
`;

const EditorTab = styled.button`
  display: flex;
  align-items: center;
  gap: ${(props) => (props.$active ? '15px' : '17px')};
  height: 21px;
  padding: ${(props) => (props.$active ? '0 8px 2px 28px' : '0 10px 2px 33px')};
  margin-left: ${(props) => (props.$active ? '-12px' : '0')};
  background: ${(props) => (props.$active ? '#454545' : '#2c2c2c')};
  font-size: ${(props) => (props.$active ? '13px' : '12px')};
  font-weight: ${(props) => (props.$active ? 700 : 400)};
  clip-path: polygon(20px 0, 100% 0, 100% 100%, 0 100%);
`;

const TabListArrow = styled.span`
  margin: 5px 9px 0 auto;
`;

const EditorGrid = styled.div`
  flex: 1;
  min-height: 0;
  display: grid;
  grid-template-columns: minmax(0, 1fr) 16px;
  grid-template-rows: minmax(0, 1fr) 17px;
`;

const Sheet = styled.div`
  display: grid;
  grid-template-columns: 9px minmax(0, 1fr);
  grid-template-rows: 10px minmax(0, 1fr);
  overflow: hidden;
  background: #fff;
  color: #333;
  border: solid #000;
  border-width: 1px 1px 0 1px;
  font: 8px 'Liberation Sans', sans-serif;
`;

const TopRuler = styled.div`
  grid-column: 2;
  display: flex;
  span {
    flex: 1;
    padding-left: 4px;
    text-align: center;
    border-right: 1px solid #000;
  }
`;

const SideRuler = styled.div`
  display: flex;
  flex-direction: column;
  overflow: hidden;
  span {
    flex: 0 0 175px;
    display: grid;
    place-items: center;
    border-bottom: 1px solid #000;
  }
`;

const Page = styled.div`
  position: relative;
  border: solid #000;
  border-width: 2px 0 0 2px;
  background: radial-gradient(circle, #f0f0f0 1px, transparent 1px) 0 0 / 10px 10px;
`;

const Placed = styled.div`
  position: absolute;
  left: ${(props) => props.$left}px;
  top: ${(props) => props.$top}px;
`;

const Note = styled.p`
  font: 12px/11px 'Liberation Mono', monospace;
  color: #111;
`;

const Splitter = styled.div`
  display: flex;
  align-items: center;
  justify-content: center;
  background: #444;
`;

const Dialog = styled.div`
  position: absolute;
  left: 287px;
  top: 95px;
  width: 614px;
  height: 517px;
  display: flex;
  flex-direction: column;
  background: #222422;
  border: 1px solid #3c3c3c;
  box-shadow: 0 0 5px rgba(0, 0, 0, 0.5);
`;

const DialogTitle = styled.div`
  height: 30px;
  display: flex;
  justify-content: space-between;
  padding: 1px 11px 0 9px;
  background: #0a0a0a;
  h2 {
    padding-top: 7px;
  }
`;

const DialogFrame = styled.div`
  flex: 1;
  margin: 7px 24px 26px 14px;
  display: flex;
  flex-direction: column;
  border: 1px solid #444;
`;

const DialogTabs = styled.div`
  height: 30px;
  display: flex;
  align-items: flex-end;
  gap: 4px;
  padding-left: 9px;
  background: #494949;
`;

const DialogTab = styled.button`
  height: 24px;
  padding: 0 7px;
  border-radius: 3px 3px 0 0;
  background: ${(props) => (props.$active ? '#222422' : '#8f8f8f')};
  font-weight: ${(props) => (props.$active ? 700 : 400)};
  color: ${(props) => (props.$active ? '#fff' : '#eaeaea')};
`;

const RadioRow = styled.div`
  height: 31px;
  display: flex;
  align-items: center;
  gap: 13px;
  padding-left: 4px;
  border-bottom: 1px solid #444;
  label {
    display: flex;
    align-items: center;
    gap: 4px;
  }
  input {
    appearance: none;
    width: 13px;
    height: 13px;
    border-radius: 50%;
    background: #fff;
  }
  input:checked {
    border: 3px solid #fff;
    background: #111;
  }
`;

const DialogBody = styled.div`
  flex: 1;
  display: flex;
  margin: 0 2px;
  border-bottom: 1px solid #444;
`;

const ParamTable = styled.table`
  align-self: flex-start;
  margin: 6px 0 0 11px;
  border-collapse: collapse;
  font-size: 12px;
  text-align: center;
  th {
    width: 139px;
    height: 32px;
    padding: 0;
    font-size: 13px;
  }
  td {
    height: 23px;
    padding: 0;
  }
  input {
    width: 94px;
    height: 19px;
    padding-left: 2px;
    background: #505050;
    font: 13px 'Liberation Sans', sans-serif;
  }
`;

const ChartHolder = styled.div`
  margin: 57px 0 0 -4px;
`;

const DialogFooter = styled.div`
  height: 63px;
  display: flex;
  align-items: center;
  gap: 25px;
  padding: 0 14px 0 4px;
  p {
    flex: 1;
    line-height: 16px;
    color: #6a6a6a;
  }
`;

const DialogButton = styled.button`
  width: 60px;
  height: 26px;
  border: 1px solid #555;
  background: #2a2a2a;
  font: 13px 'Liberation Sans', sans-serif;
  color: #fff;
`;

const SearchColumn = styled.section`
  width: 405px;
  display: flex;
  flex-direction: column;
  padding-right: 6px;
`;

const HideToggle = styled.button`
  height: 25px;
  flex: none;
  display: flex;
  align-items: center;
  gap: 7px;
  padding: 0 0 3px 9px;
  font-size: 11px;
`;

const SearchTabs = styled.div`
  height: 30px;
  flex: none;
  display: flex;
  background: #2f2f2f;
  border-bottom: 2px solid #3c3c3c;
`;

const SearchTab = styled.button`
  width: ${(props) => (props.$active ? '77px' : '60px')};
  border-right: 1px solid #3c3c3c;
  font-size: 11px;
  ${(props) => props.$active && css`
    background: #0a9cff;
    color: #fff;
  `}
`;

const CategoryArea = styled.div`
  flex: 1;
  min-height: 0;
  display: flex;
  overflow: hidden;
  background: #222422;
  font-size: 13px;
`;

const CategoryList = styled.ul`
  flex: 1;
  margin-top: -3px;
`;

const CategoryRow = styled.li`
  height: 24px;
  display: flex;
  align-items: center;
  padding-left: ${(props) => (props.$nested ? '51px' : '36px')};
  background: ${(props) => (props.$active ? '#006fd6' : 'transparent')};
  span {
    flex: 1;
    margin-left: 4px;
  }
  b {
    width: 40px;
    padding-bottom: 6px;
    font-weight: 400;
  }
`;

const Twisty = styled.i`
  width: 16px;
  padding-left: 1px;
`;

const SearchBar = styled.div`
  height: 39px;
  flex: none;
  display: flex;
  gap: 2px;
  padding: 6px 16px 7px 16px;
  background: #2f2f2f;
  font-size: 11px;
`;

const FilterBox = styled.div`
  position: relative;
  width: 128px;
  background: #505050;
  select {
    width: 100%;
    height: 26px;
    padding-left: 7px;
  }
  svg {
    position: absolute;
    right: 9px;
    top: 9px;
  }
`;

const SearchBox = styled.div`
  flex: 1;
  display: flex;
  align-items: center;
  padding: 0 7px 0 10px;
  background: #555;
  input {
    flex: 1;
    min-width: 0;
  }
  input::placeholder {
    color: #7c7c7c;
  }
`;

const PartArea = styled.div`
  height: 266px;
  flex: none;
  overflow: hidden;
  background: #222422;
  border-top: 1px solid #414141;
`;

const PartTable = styled.table`
  width: 100%;
  table-layout: fixed;
  border-collapse: collapse;
  th, td {
    height: 24px;
    padding: 0 4px 1px;
    border: 1px solid #454545;
    border-left: none;
    text-align: left;
    font-size: 13px;
    line-height: 18px;
    font-weight: 400;
    overflow: hidden;
    text-overflow: ellipsis;
  }
  th {
    height: 28px;
    border-bottom-width: 2px;
    font-size: 12px;
  }
  td:first-child {
    padding: 1px 0 0 12px;
  }
  td[rowspan] {
    padding: 0;
    height: 240px;
    border: none;
    vertical-align: top;
  }
`;

const ModelColumn = styled.aside`
  width: 119px;
  overflow: hidden;
  background: #222422;
`;

const ModelTitle = styled.h2`
  height: 24px;
  padding: 1px 0 0 5px;
  background: #353535;
  color: #1f9ce8;
`;

const ModelTree = styled.ul`
  background: #323232;
`;

const ModelRow = styled.li`
  height: 24px;
  display: flex;
  padding-left: 1px;
`;

const ModelLabel = styled.span`
  display: flex;
  flex: 1 0 auto;
  align-items: center;
  gap: 5px;
  padding-left: 2px;
  font-size: 11px;
  background: ${(props) => (props.$active ? '#454545' : 'transparent')};
`;

const DrcSection = styled.section`
  height: 259px;
  flex: none;
  margin-right: 6px;
  background: #2f2f2f;
  border-top: 6px solid #414141;
  ${HeaderBar} {
    height: 26px;
    padding-bottom: 1px;
  }
`;

const DrcTable = styled.table`
  width: 100%;
  table-layout: fixed;
  border-collapse: collapse;
  th {
    height: 23px;
    padding: 0 4px;
    border: 1px solid #3f3f3f;
    border-left: none;
    background: #242424;
    text-align: left;
    font-weight: 400;
  }
`;

const BottomTabs = styled.div`
  height: 24px;
  flex: none;
  display: flex;
  gap: 2px;
  background: #353535;
  border-top: 1px solid #484848;
`;

const BottomTab = styled.button`
  height: 22px;
  padding: 0 5px 2px;
  border: ${(props) => (props.$active ? '1px solid #6a6a6a' : '1px solid transparent')};
  border-top: none;
  background: ${(props) => (props.$active ? '#404040' : 'transparent')};
  color: ${(props) => (props.$blue ? '#1f9ce8' : '#e6e6e6')};
`;

const RightTabs = styled.div`
  width: 119px;
  margin-left: auto;
  display: flex;
  gap: 2px;
  padding-left: 1px;
`;

const StatusBar = styled.footer`
  height: 27px;
  flex: none;
  display: flex;
  align-items: center;
  justify-content: flex-end;
  background: #555;
  em {
    width: 20px;
    margin-left: 332px;
    font-style: normal;
    overflow: hidden;
  }
`;

const TaskbarBar = styled.footer`
  height: 40px;
  flex: none;
  display: flex;
  background: #2c3134;
`;

const TaskButton = styled.button`
  width: 49px;
  display: grid;
  place-items: center;
  background: ${(props) => (props.$active ? '#3f464a' : 'transparent')};
  ${(props) => props.$open && css`
    background-image: linear-gradient(#9aa9b3, #9aa9b3);
    background-size: ${props.$active ? '49px' : '40px'} 2px;
    background-position: center bottom;
    background-repeat: no-repeat;
  `}
`;

const Youdao = styled.span`
  width: 24px;
  height: 24px;
  display: grid;
  place-items: center;
  border-radius: 3px;
  background: #ff0d1c;
  color: #fff;
  font: 700 10px 'Noto Sans CJK SC', sans-serif;
`;

const Tray = styled.div`
  margin-left: auto;
  display: flex;
  align-items: center;
  gap: 8px;
  padding-right: 10px;
`;

const Lang = styled.span`
  margin-right: 22px;
  font: 11px 'Liberation Mono', monospace;
  color: #fff;
`;

const Memory = styled.span`
  margin-right: -3px;
  line-height: 17px;
  text-align: center;
  color: #fff;
`;

const Caption = styled.div`
  position: absolute;
  left: 142px;
  top: 55px;
  pointer-events: none;
  color: #ff7f26;
  font: 700 174px/293px 'Noto Sans', 'Noto Sans CJK SC', sans-serif;
`;

export default App;
